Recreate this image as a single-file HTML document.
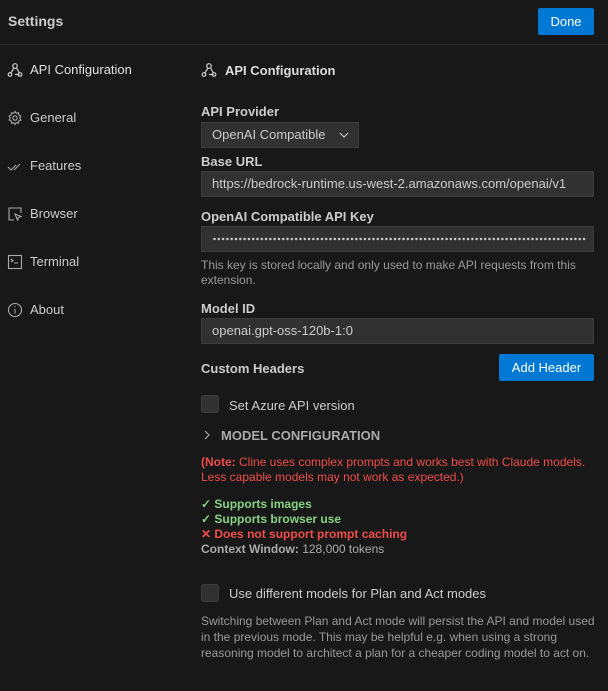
<!DOCTYPE html>
<html><head><style>
*{margin:0;padding:0;box-sizing:border-box}
body{width:608px;height:691px;background:#181818;color:#ccc;font-family:"Liberation Sans",sans-serif;font-size:13px;position:relative;overflow:hidden}
.a{position:absolute;white-space:nowrap}
.hdr{position:absolute;left:0;top:0;width:608px;height:45px;border-bottom:1px solid #2b2b2b}
.nav{position:absolute;left:7px;font-size:13px;color:#ccc;white-space:nowrap;width:180px;height:18px}
.nav svg{position:absolute;left:0;top:0}
.nav span{position:absolute;left:23px;top:0}
.inp{position:absolute;background:#313131;border:1px solid #3c3c3c;color:#ccc;padding-left:10px;line-height:24px;font-size:13px;white-space:nowrap;overflow:hidden}
.lbl{position:absolute;left:201px;font-weight:bold;font-size:13px;color:#ccc}
.btn{position:absolute;background:#0078d4;color:#fff;border-radius:2px;text-align:center;font-size:13px}
.cb{position:absolute;width:18px;height:18px;background:#313131;border:1px solid #3c3c3c;border-radius:3px}
</style></head><body>
<div class="hdr"></div>
<div class="a" style="left:8px;top:13px;font-weight:bold;font-size:14px;color:#ccc">Settings</div>
<div class="btn" style="left:538px;top:8px;width:56px;height:27px;line-height:27px">Done</div>

<div class="nav" style="top:62px;color:#e0e0e0"><svg width="16" height="16" viewBox="0 0 16 16" fill="none" stroke="#ccc" stroke-width="1.2"><circle cx="8" cy="4" r="2.3"/><path d="M7 6 L3.5 11.5 M8 12.5 h4.5 M9.5 6 L12.5 11"/><circle cx="3" cy="12.5" r="1.8"/><circle cx="13" cy="12.5" r="1.8"/></svg><span>API Configuration</span></div>
<div class="nav" style="top:110px"><svg width="16" height="16" viewBox="0 0 16 16" fill="none" stroke="#aaa" stroke-width="1.1"><circle cx="8" cy="8" r="2.2"/><path d="M8 1.5l1.3 1.8 2.2-.5.3 2.2 2 1-1 2 1 2-2 1-.3 2.2-2.2-.5L8 14.5l-1.3-1.8-2.2.5-.3-2.2-2-1 1-2-1-2 2-1 .3-2.2 2.2.5z"/></svg><span>General</span></div>
<div class="nav" style="top:158px"><svg width="16" height="16" viewBox="0 0 16 16" fill="none" stroke="#aaa" stroke-width="1.1"><path d="M1 9l3 3 5-5M7 12l6-6"/></svg><span>Features</span></div>
<div class="nav" style="top:206px"><svg width="16" height="16" viewBox="0 0 16 16" fill="none" stroke="#aaa" stroke-width="1.1"><path d="M7 14H2V2h12v5"/><path d="M8 8l6 2.5-2.5 1-1 2.5z"/></svg><span>Browser</span></div>
<div class="nav" style="top:254px"><svg width="16" height="16" viewBox="0 0 16 16" fill="none" stroke="#aaa" stroke-width="1.1"><rect x="1.5" y="1.5" width="13" height="13"/><path d="M4 5l2 1.5L4 8M7 9h4"/></svg><span>Terminal</span></div>
<div class="nav" style="top:302px"><svg width="16" height="16" viewBox="0 0 16 16" fill="none" stroke="#aaa" stroke-width="1.1"><circle cx="8" cy="8" r="6.5"/><path d="M8 7v4.5M8 4.5v1"/></svg><span>About</span></div>

<svg class="a" style="left:201px;top:62px" width="16" height="16" viewBox="0 0 16 16" fill="none" stroke="#ccc" stroke-width="1.2"><circle cx="8" cy="4" r="2.3"/><path d="M7 6 L3.5 11.5 M8 12.5 h4.5 M9.5 6 L12.5 11"/><circle cx="3" cy="12.5" r="1.8"/><circle cx="13" cy="12.5" r="1.8"/></svg>
<div class="a" style="left:225px;top:63px;font-weight:bold;font-size:13px;color:#ddd">API Configuration</div>

<div class="lbl" style="top:104px">API Provider</div>
<div class="inp" style="left:201px;top:122px;width:158px;height:26px">OpenAI Compatible<svg style="position:absolute;left:137px;top:8px" width="10" height="8" viewBox="0 0 10 8" fill="none" stroke="#ccc" stroke-width="1.1"><path d="M1 2l4 4 4-4"/></svg></div>
<div class="lbl" style="top:154px">Base URL</div>
<div class="inp" style="left:201px;top:171px;width:393px;height:26px">https://bedrock-runtime.us-west-2.amazonaws.com/openai/v1</div>
<div class="lbl" style="top:209px">OpenAI Compatible API Key</div>
<div class="inp" style="left:201px;top:226px;width:393px;height:26px"><div style="position:absolute;left:11px;top:10px;width:373px;height:4px;background-image:radial-gradient(circle at 1.5px 2px,#ccc 1.1px,transparent 1.4px);background-size:4.3px 4px;background-repeat:repeat-x"></div></div>
<div class="a" style="left:201px;top:258px;font-size:12px;color:#999;line-height:15px">This key is stored locally and only used to make API requests from this<br>extension.</div>

<div class="lbl" style="top:301px">Model ID</div>
<div class="inp" style="left:201px;top:318px;width:393px;height:26px">openai.gpt-oss-120b-1:0</div>

<div class="lbl" style="top:361px">Custom Headers</div>
<div class="btn" style="left:499px;top:354px;width:95px;height:27px;line-height:27px">Add Header</div>

<div class="cb" style="left:201px;top:395px"></div>
<div class="a" style="left:229px;top:398px">Set Azure API version</div>

<svg class="a" style="left:203px;top:430px" width="8" height="10" viewBox="0 0 8 10" fill="none" stroke="#aaa" stroke-width="1.1"><path d="M2 1l4 4-4 4"/></svg>
<div class="a" style="left:221px;top:428px;font-weight:bold;color:#aaa;font-size:13px">MODEL CONFIGURATION</div>

<div class="a" style="left:201px;top:455px;color:#f14c4c;font-size:12px;line-height:15px"><b>(Note:</b> Cline uses complex prompts and works best with Claude models.<br>Less capable models may not work as expected.)</div>

<div class="a" style="left:201px;top:497px;color:#89d185;font-size:12px;font-weight:bold;line-height:15px">✓ Supports images<br>✓ Supports browser use</div>
<div class="a" style="left:201px;top:527px;color:#f14c4c;font-size:12px;font-weight:bold">✕ Does not support prompt caching</div>
<div class="a" style="left:201px;top:542px;color:#aaa;font-size:12px"><b>Context Window:</b> 128,000 tokens</div>

<div class="cb" style="left:201px;top:584px"></div>
<div class="a" style="left:229px;top:586px">Use different models for Plan and Act modes</div>
<div class="a" style="left:201px;top:613px;font-size:12px;color:#999;line-height:16px">Switching between Plan and Act mode will persist the API and model used<br>in the previous mode. This may be helpful e.g. when using a strong<br>reasoning model to architect a plan for a cheaper coding model to act on.</div>
</body></html>
